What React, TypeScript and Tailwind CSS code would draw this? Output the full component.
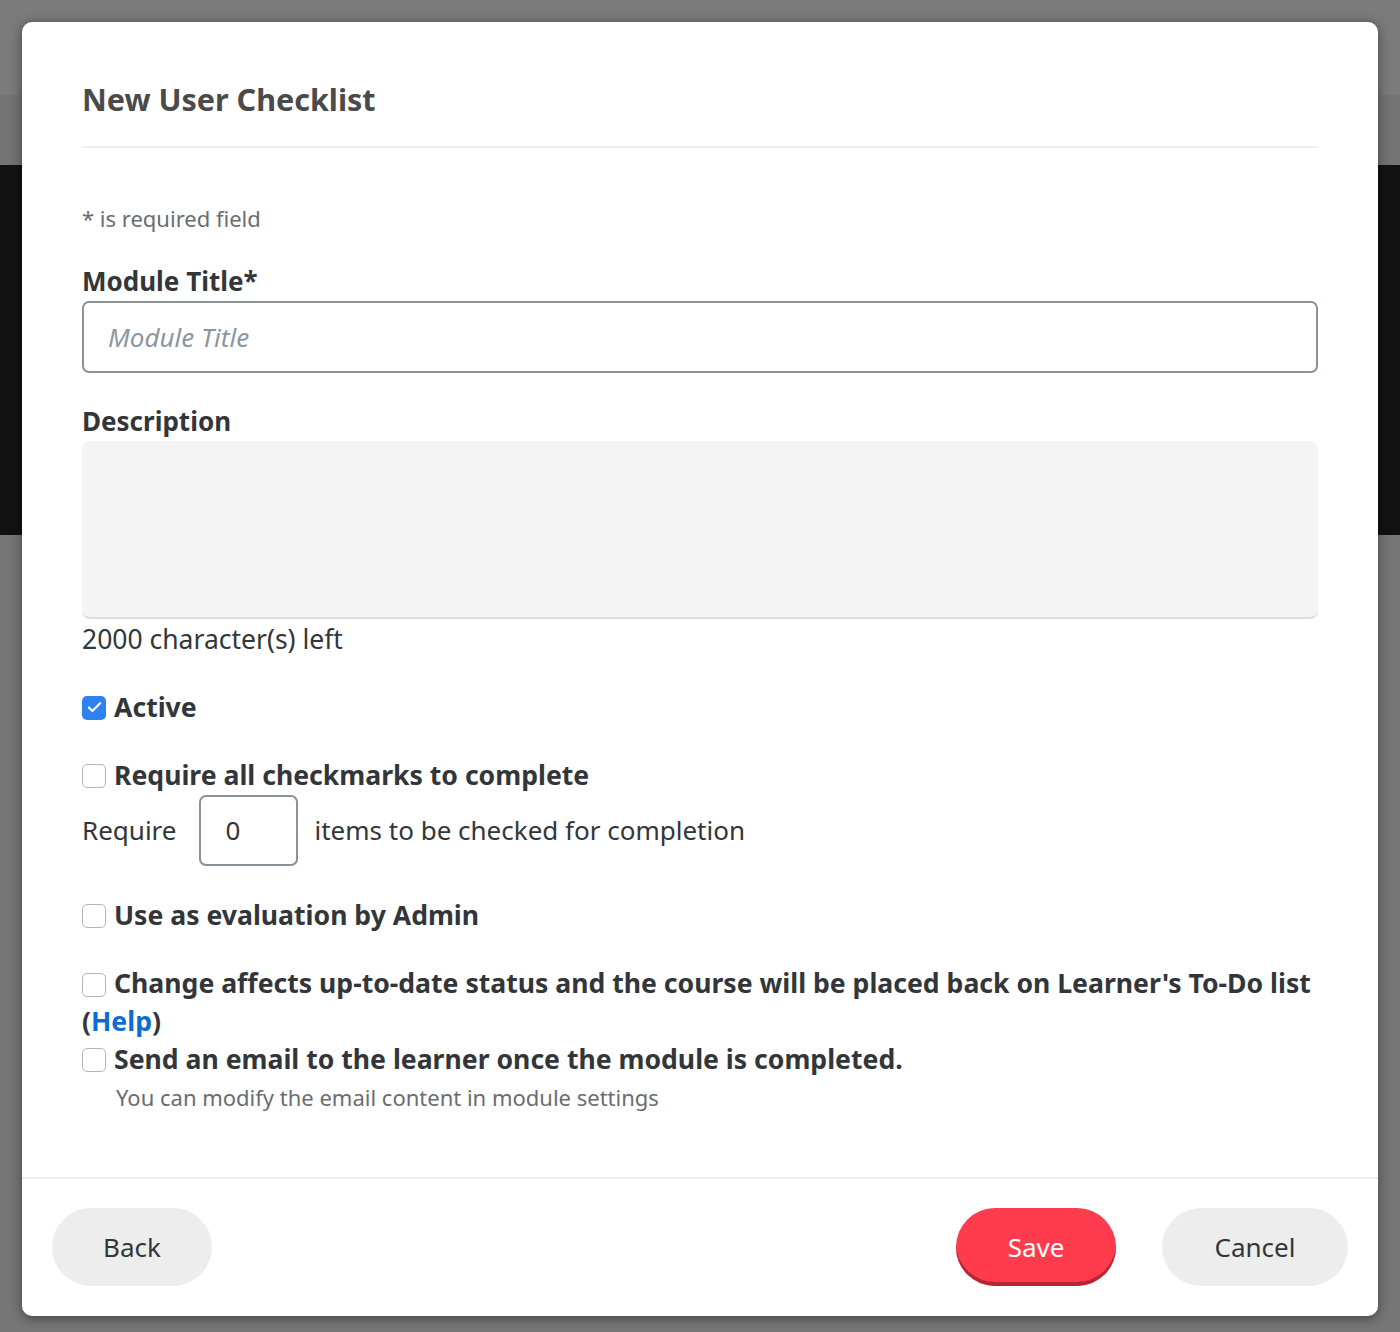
import { Check } from 'lucide-react'

const font = { fontFamily: '"Noto Sans", "Open Sans", sans-serif' }

function Box({ checked = false }: { checked?: boolean }) {
  return checked ? (
    <span className="flex h-6 w-6 shrink-0 items-center justify-center rounded-[5px] bg-[#2f80f0]">
      <Check size={17} strokeWidth={3} className="text-white" />
    </span>
  ) : (
    <span className="h-6 w-6 shrink-0 rounded-[5px] border border-[#b5b5b5] bg-white" />
  )
}

function CheckRow({ label, checked }: { label: string; checked?: boolean }) {
  return (
    <label className="flex items-center gap-2">
      <Box checked={checked} />
      <span className="text-[26.6px] font-bold text-[#32363a]">{label}</span>
    </label>
  )
}

export default function App() {
  return (
    <div className="relative h-[1332px] w-[1400px] overflow-hidden bg-[#767676]" style={font}>
      {/* page behind the overlay */}
      <div className="h-[95px] bg-[#7b7b7b]" />
      <div className="h-[70px] bg-[#747474]" />
      <div className="h-[370px] bg-[#121212]" />

      <div className="absolute left-[22px] top-[22px] flex h-[1294px] w-[1356px] flex-col rounded-[10px] bg-white shadow-[0_2px_12px_rgba(0,0,0,0.45)]">
        <div className="flex-1 px-[60px]">
          <div className="border-b-2 border-[#eeeeee] pb-[26px] pt-[56px]">
            <h1 className="text-[30.5px] font-bold leading-[42px] text-[#4a4a4a]">New User Checklist</h1>
          </div>

          <p className="mt-[55px] text-[22px] leading-[30px] text-[#6a6d70]">* is required field</p>

          <label className="mt-[33px] block text-[26px] font-bold leading-[30px] text-[#32363a]">Module Title*</label>
          <div className="mt-[5px] flex h-[72px] items-center rounded-[7px] border-2 border-[#89919a] px-6">
            <span className="text-[26px] italic text-[#8c96a0]">Module Title</span>
          </div>

          <label className="mt-[33px] block text-[26px] font-bold leading-[30px] text-[#32363a]">Description</label>
          <div className="mt-[5px] h-[178px] rounded-[8px] border-b-2 border-[#dcdcdc] bg-[#f4f4f4]" />
          <p className="mt-[2px] text-[26.5px] leading-[36px] text-[#32363a]">2000 character(s) left</p>

          <div className="mt-[31px]">
            <CheckRow label="Active" checked />
          </div>

          <div className="mt-[28px]">
            <CheckRow label="Require all checkmarks to complete" />
          </div>
          <div className="mt-[-1px] flex items-center text-[26px] text-[#32363a]">
            <span>Require</span>
            <span className="ml-[23px] flex h-[71px] w-[99px] items-center rounded-[7px] border-2 border-[#89919a] pl-6">0</span>
            <span className="ml-[16px]">items to be checked for completion</span>
          </div>

          <div className="mt-[30px]">
            <CheckRow label="Use as evaluation by Admin" />
          </div>

          <div className="mt-[28px] text-[26.6px] font-bold leading-[38px] text-[#32363a]">
            <span className="mr-2 inline-block h-6 w-6 translate-y-[4px] rounded-[5px] border border-[#b5b5b5] bg-white" />
            Change affects up-to-date status and the course will be placed back on Learner's To-Do list{' '}
            <span className="whitespace-nowrap">
              (<a className="text-[#0a6ed1]">Help</a>)
            </span>
          </div>
          <div>
            <CheckRow label="Send an email to the learner once the module is completed." />
          </div>
          <p className="ml-[34px] mt-[-1px] text-[22px] leading-[36px] text-[#6a6d70]">
            You can modify the email content in module settings
          </p>
        </div>

        <div className="flex h-[139px] items-center border-t-2 border-[#eeeeee] px-[30px] pb-[1px]">
          <button className="h-[78px] w-[160px] rounded-full bg-[#ededed] text-[26px] text-[#32363a]">Back</button>
          <div className="flex-1" />
          <button className="h-[78px] w-[160px] rounded-full bg-[#ff3b4e] text-[26px] text-white shadow-[inset_0_-4px_0_#b72633]">
            Save
          </button>
          <button className="ml-[46px] h-[78px] w-[186px] rounded-full bg-[#ededed] text-[26px] text-[#32363a]">Cancel</button>
        </div>
      </div>
    </div>
  )
}
